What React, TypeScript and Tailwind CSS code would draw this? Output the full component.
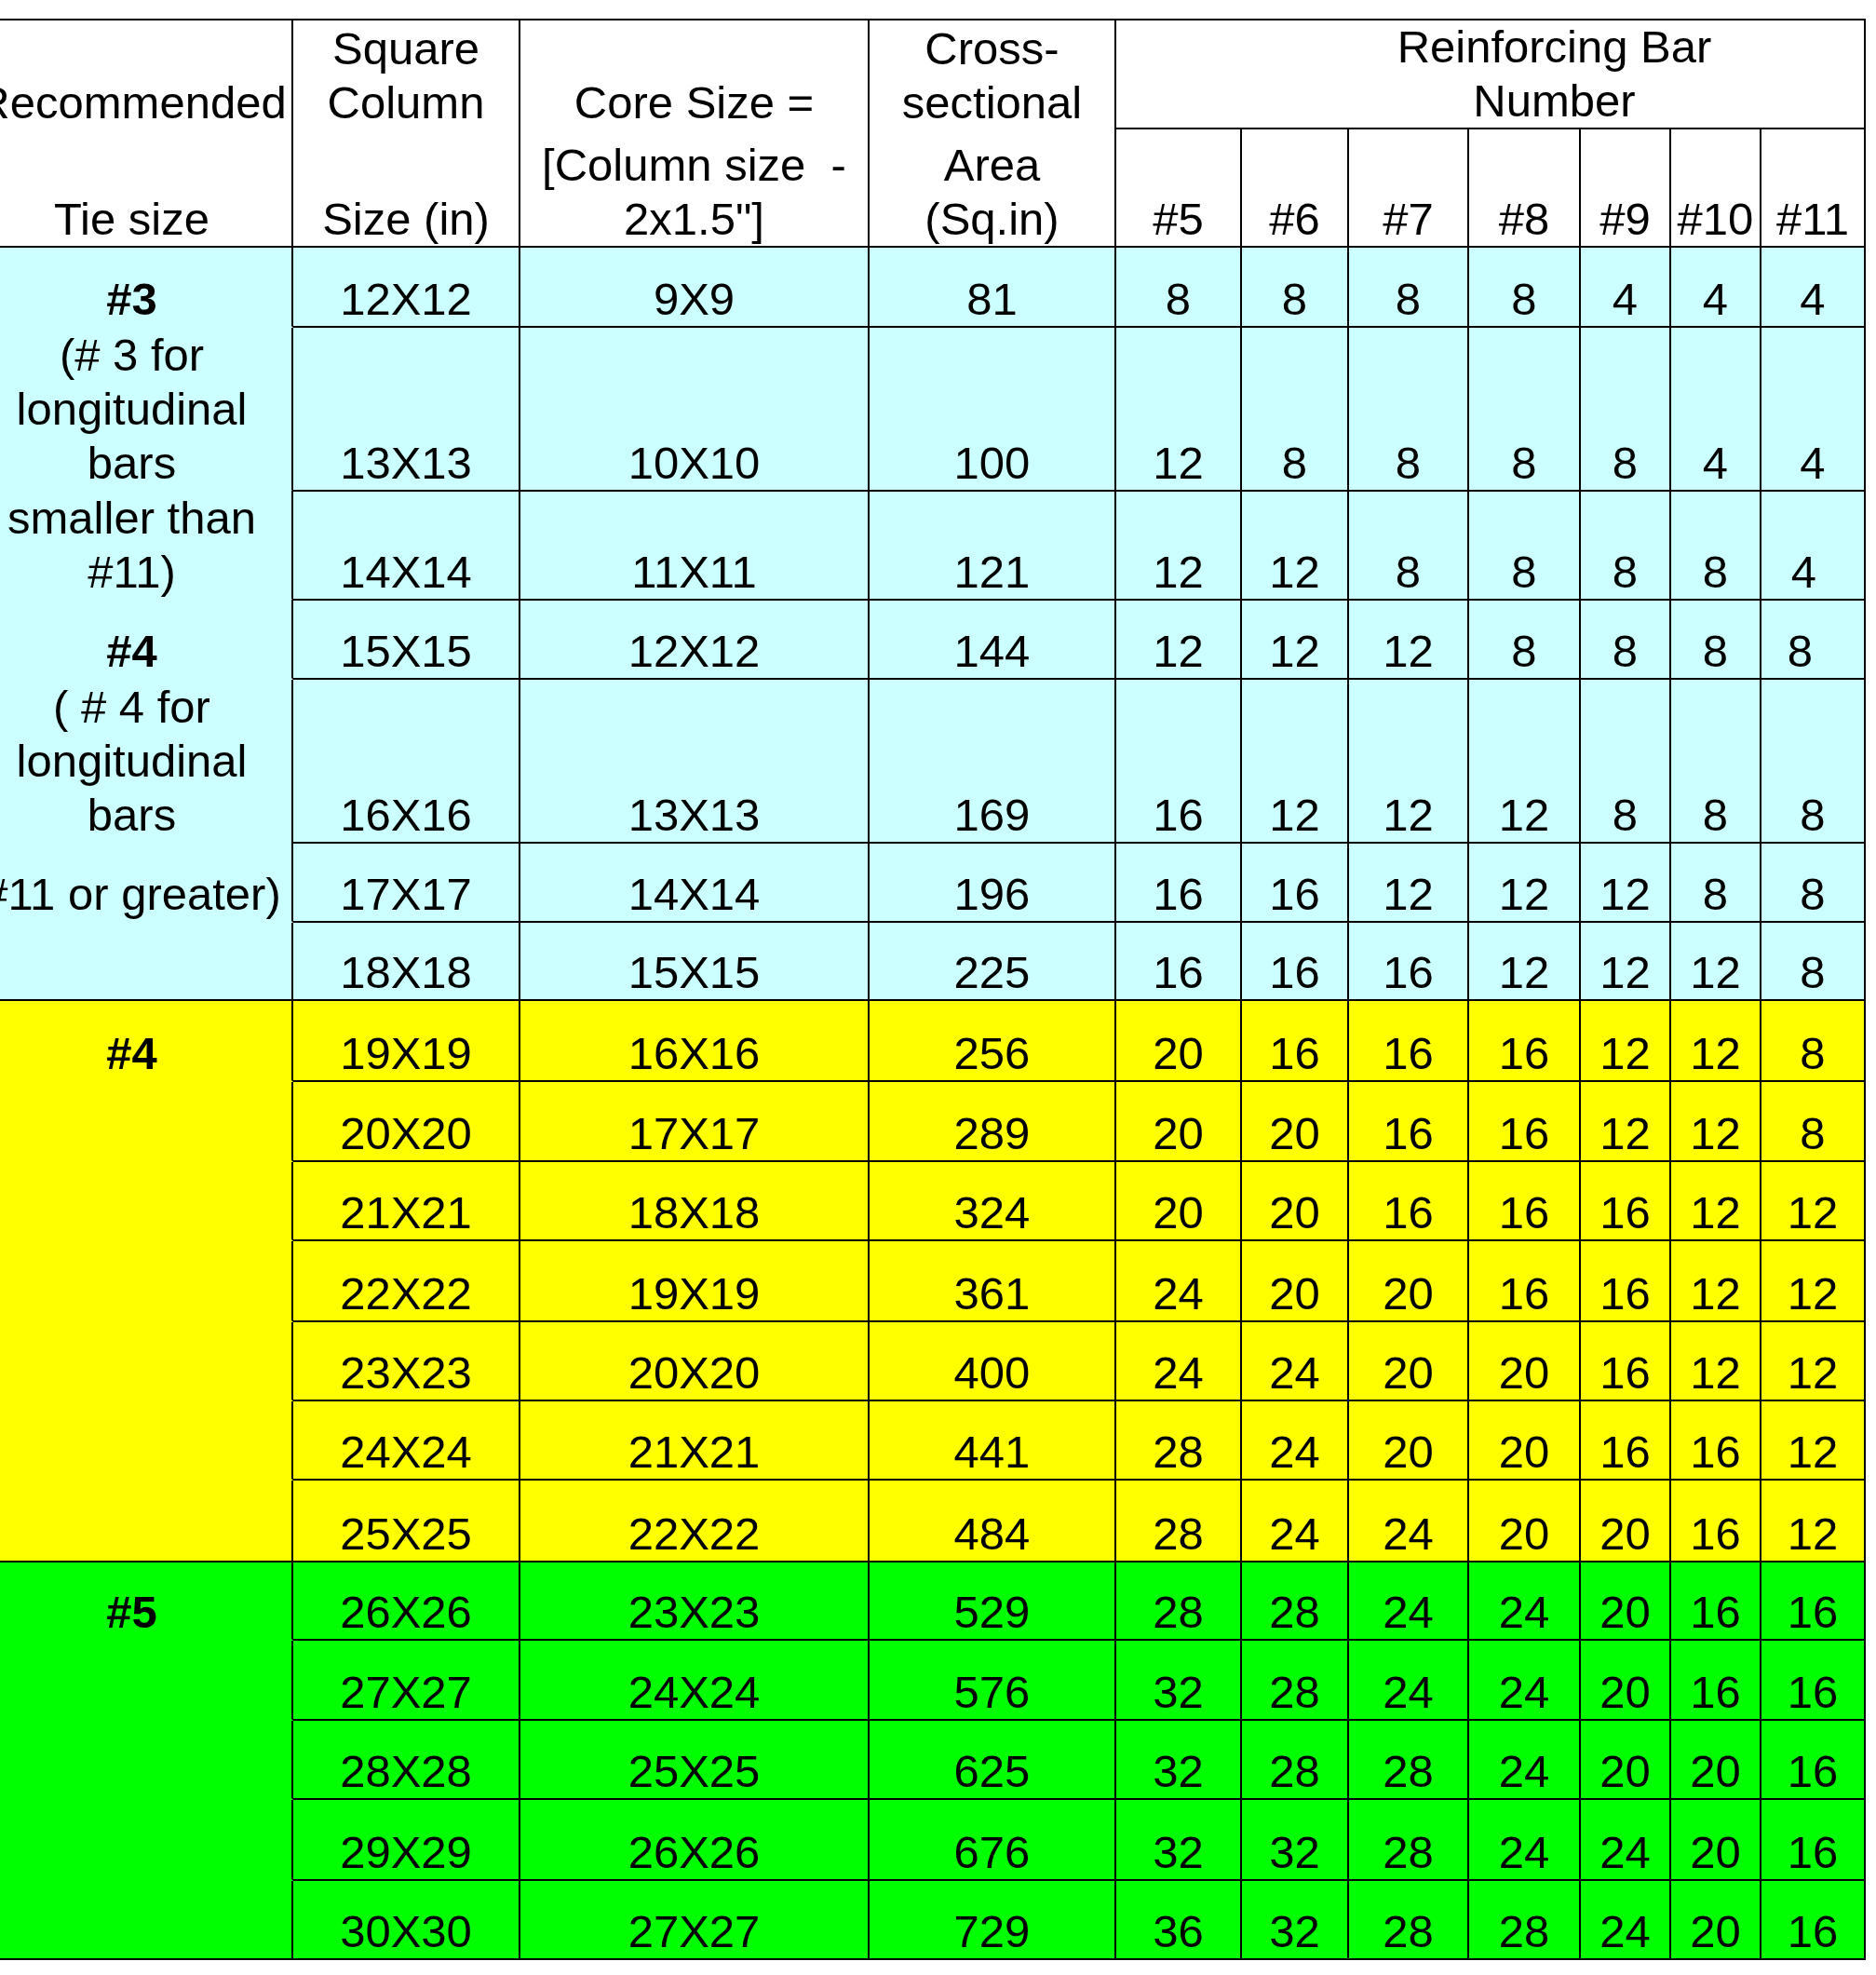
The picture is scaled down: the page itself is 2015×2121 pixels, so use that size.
const barCols = ["#5", "#6", "#7", "#8", "#9", "#10", "#11"];

type Row = {
  h: string;
  bg: string;
  tie?: string[];
  bold?: boolean;
  groupEnd?: boolean;
  cells: (string | number)[];
};

const rows: Row[] = [
  { h: "h-[86px]", bg: "bg-[#ccffff]", tie: ["#3"], bold: true, cells: ["12X12", "9X9", "81", 8, 8, 8, 8, 4, 4, 4] },
  { h: "h-[175px]", bg: "bg-[#ccffff]", tie: ["(# 3 for", "longitudinal", "bars"], cells: ["13X13", "10X10", "100", 12, 8, 8, 8, 8, 4, 4] },
  { h: "h-[117px]", bg: "bg-[#ccffff]", tie: ["smaller than", "#11)"], cells: ["14X14", "11X11", "121", 12, 12, 8, 8, 8, 8, 4] },
  { h: "h-[86px]", bg: "bg-[#ccffff]", tie: ["#4"], bold: true, cells: ["15X15", "12X12", "144", 12, 12, 12, 8, 8, 8, 8] },
  { h: "h-[174px]", bg: "bg-[#ccffff]", tie: ["( # 4 for", "longitudinal", "bars"], cells: ["16X16", "13X13", "169", 16, 12, 12, 12, 8, 8, 8] },
  { h: "h-[87px]", bg: "bg-[#ccffff]", tie: ["#11 or greater)"], cells: ["17X17", "14X14", "196", 16, 16, 12, 12, 12, 8, 8] },
  { h: "h-[84px]", bg: "bg-[#ccffff]", groupEnd: true, cells: ["18X18", "15X15", "225", 16, 16, 16, 12, 12, 12, 8] },
  { h: "h-[87px]", bg: "bg-[#ffff00]", tie: ["#4"], bold: true, cells: ["19X19", "16X16", "256", 20, 16, 16, 16, 12, 12, 8] },
  { h: "h-[86px]", bg: "bg-[#ffff00]", cells: ["20X20", "17X17", "289", 20, 20, 16, 16, 12, 12, 8] },
  { h: "h-[85px]", bg: "bg-[#ffff00]", cells: ["21X21", "18X18", "324", 20, 20, 16, 16, 16, 12, 12] },
  { h: "h-[87px]", bg: "bg-[#ffff00]", cells: ["22X22", "19X19", "361", 24, 20, 20, 16, 16, 12, 12] },
  { h: "h-[85px]", bg: "bg-[#ffff00]", cells: ["23X23", "20X20", "400", 24, 24, 20, 20, 16, 12, 12] },
  { h: "h-[85px]", bg: "bg-[#ffff00]", cells: ["24X24", "21X21", "441", 28, 24, 20, 20, 16, 16, 12] },
  { h: "h-[88px]", bg: "bg-[#ffff00]", groupEnd: true, cells: ["25X25", "22X22", "484", 28, 24, 24, 20, 20, 16, 12] },
  { h: "h-[84px]", bg: "bg-[#00ff00]", tie: ["#5"], bold: true, cells: ["26X26", "23X23", "529", 28, 28, 24, 24, 20, 16, 16] },
  { h: "h-[86px]", bg: "bg-[#00ff00]", cells: ["27X27", "24X24", "576", 32, 28, 24, 24, 20, 16, 16] },
  { h: "h-[85px]", bg: "bg-[#00ff00]", cells: ["28X28", "25X25", "625", 32, 28, 28, 24, 20, 20, 16] },
  { h: "h-[87px]", bg: "bg-[#00ff00]", cells: ["29X29", "26X26", "676", 32, 32, 28, 24, 24, 20, 16] },
  { h: "h-[85px]", bg: "bg-[#00ff00]", groupEnd: true, cells: ["30X30", "27X27", "729", 36, 32, 28, 28, 24, 20, 16] },
];

// a couple of cells in the last column sit a bit left of centre
const nudge: Record<string, string> = {
  "2-9": "pr-[19px]",
  "3-9": "pr-[27px]",
};

const cell = "flex items-end justify-center border-r-2 border-b-2 border-black";

function Lines({ lines }: { lines: string[] }) {
  return (
    <div className="text-center whitespace-pre">
      {lines.map((l, i) => (
        <div key={i}>{l}</div>
      ))}
    </div>
  );
}

export default function App() {
  return (
    <div className="min-h-screen bg-white overflow-hidden">
      <div className="pt-[20px] ml-[-30px] w-[2034px] font-['Liberation_Sans',Arial,sans-serif] text-[49px] leading-[58px] text-black">
        <div className="border-t-2 border-black">
          {/* header */}
          <div className="grid grid-cols-[345px_244px_375px_265px_805px] h-[244px] border-b-2 border-black bg-white">
            <div className="flex flex-col border-r-2 border-black">
              <div className="h-[117px] flex items-end justify-center">Recommended</div>
              <div className="flex-1 flex items-end justify-center">Tie size</div>
            </div>
            <div className="flex flex-col border-r-2 border-black">
              <div className="h-[117px] flex items-end justify-center">
                <Lines lines={["Square", "Column"]} />
              </div>
              <div className="flex-1 flex items-end justify-center">Size (in)</div>
            </div>
            <div className="flex flex-col border-r-2 border-black">
              <div className="h-[117px] flex items-end justify-center">Core Size =</div>
              <div className="flex-1 flex items-end justify-center">
                <Lines lines={["[Column size  -", '2x1.5"]']} />
              </div>
            </div>
            <div className="flex flex-col border-r-2 border-black">
              <div className="h-[117px] flex items-end justify-center">
                <Lines lines={["Cross-", "sectional"]} />
              </div>
              <div className="flex-1 flex items-end justify-center">
                <Lines lines={["Area", "(Sq.in)"]} />
              </div>
            </div>
            <div className="flex flex-col">
              <div className="h-[117px] flex items-end justify-center pl-[138px] border-b-2 border-r-2 border-black">
                <Lines lines={["Reinforcing Bar", "Number"]} />
              </div>
              <div className="flex-1 grid grid-cols-[135px_115px_129px_120px_97px_97px_112px]">
                {barCols.map((b) => (
                  <div key={b} className="flex items-end justify-center border-r-2 border-black">
                    {b}
                  </div>
                ))}
              </div>
            </div>
          </div>

          {/* body */}
          {rows.map((r, ri) => (
            <div
              key={ri}
              className={`grid grid-cols-[345px_244px_375px_265px_135px_115px_129px_120px_97px_97px_112px] ${r.h} ${r.bg}`}
            >
              <div
                className={`flex items-end justify-center border-r-2 border-b-2 border-black ${
                  r.groupEnd ? "" : "border-b-transparent"
                } ${r.bold ? "font-bold" : ""}`}
              >
                {r.tie && <Lines lines={r.tie} />}
              </div>
              {r.cells.map((c, ci) => (
                <div key={ci} className={`${cell} ${nudge[`${ri}-${ci}`] ?? ""}`}>
                  {c}
                </div>
              ))}
            </div>
          ))}
        </div>
      </div>
    </div>
  );
}
